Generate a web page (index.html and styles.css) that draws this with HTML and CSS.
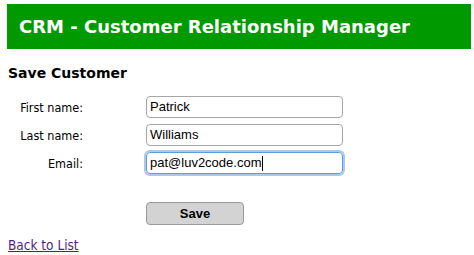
FILE: index.html
```html
<!DOCTYPE html>
<html>
<head>
<meta charset="utf-8">
<link rel="stylesheet" href="styles.css">
</head>
<body>
<div class="wrapper">
  <div class="header"><h2 class="title">CRM - Customer Relationship Manager</h2></div>
</div>
<div class="container">
  <h3 class="heading">Save Customer</h3>
  <form class="form">
    <label class="label">First name:</label>
    <div class="field">Patrick</div>
    <label class="label">Last name:</label>
    <div class="field">Williams</div>
    <label class="label">Email:</label>
    <div class="field focused">pat@luv2code.com<span class="caret"></span></div>
    <div class="btncell"><span class="save">Save</span></div>
  </form>
  <a class="back" href="#">Back to List</a>
</div>
</body>
</html>
```
FILE: styles.css
```css
html, body { margin: 0; padding: 0; background: #fff; }
body { font-family: "DejaVu Sans", Verdana, sans-serif; color: #000; }
.wrapper { padding: 4px 3px 0 7px; }
.header {
  background: #009a00;
  height: 45px;
  display: flex;
  align-items: center;
  padding-left: 12px;
}
.title {
  margin: 0;
  color: #fff;
  font-size: 18px;
  font-weight: bold;
}
.container { padding-left: 8px; }
.heading {
  margin: 14px 0 0 0;
  font-size: 14px;
  font-weight: bold;
  line-height: 20px;
}
.form {
  margin-top: 13px;
  display: grid;
  grid-template-columns: 75px 197px;
  column-gap: 63px;
  row-gap: 6px;
  align-items: center;
}
.label {
  text-align: right;
  font-family: "DejaVu Sans Condensed", "DejaVu Sans", sans-serif;
  font-size: 12.5px;
}
.field {
  box-sizing: border-box;
  height: 22px;
  border: 1px solid #a6a6a6;
  border-radius: 4px;
  padding: 0 3px;
  font-family: "Liberation Sans", Arial, sans-serif;
  font-size: 13px;
  line-height: 20px;
  display: flex;
  align-items: center;
}
.focused {
  border: 1px solid #5e9ed6;
  box-shadow: 0 0 0 2px #a9c9ee;
}
.caret {
  display: inline-block;
  width: 1px;
  height: 15px;
  background: #000;
  margin-left: 1px;
}
.btncell { grid-column: 2; margin-top: 22px; }
.save {
  box-sizing: border-box;
  display: flex;
  align-items: center;
  justify-content: center;
  width: 98px;
  height: 23px;
  background: #d3d3d3;
  border: 1px solid #9a9a9a;
  border-radius: 4px;
  font-family: "Liberation Sans", Arial, sans-serif;
  font-weight: bold;
  font-size: 13px;
}
.back {
  display: inline-block;
  margin-top: 12px;
  color: #551a8b;
  font-family: "DejaVu Sans Condensed", "DejaVu Sans", sans-serif;
  font-size: 13.5px;
}
```
